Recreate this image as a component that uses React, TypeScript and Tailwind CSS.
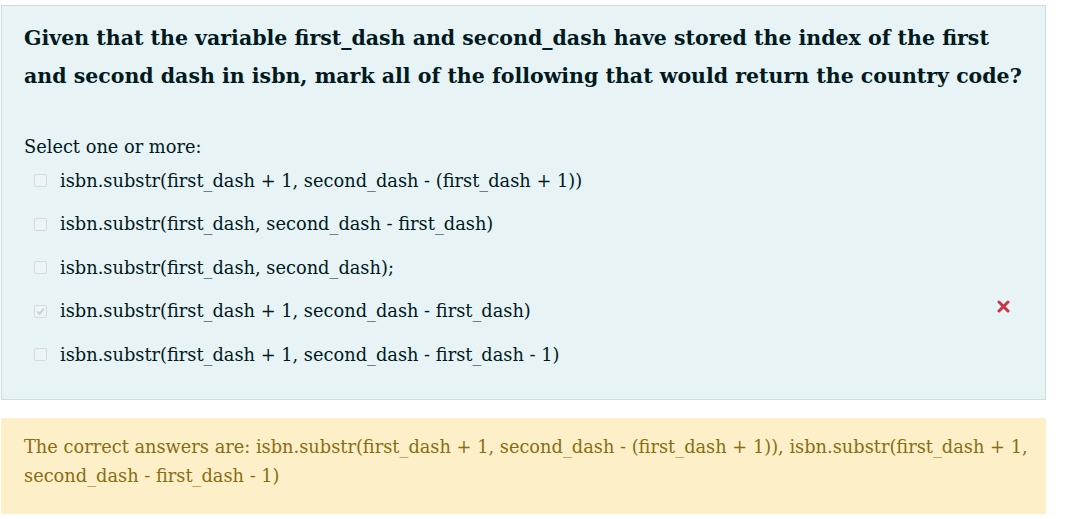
import React from 'react';

const options = [
  { text: 'isbn.substr(first_dash + 1, second_dash - (first_dash + 1))', checked: false, wrong: false },
  { text: 'isbn.substr(first_dash, second_dash - first_dash)', checked: false, wrong: false },
  { text: 'isbn.substr(first_dash, second_dash);', checked: false, wrong: false },
  { text: 'isbn.substr(first_dash + 1, second_dash - first_dash)', checked: true, wrong: true },
  { text: 'isbn.substr(first_dash + 1, second_dash - first_dash - 1)', checked: false, wrong: false },
];

const Box = ({ checked }: { checked: boolean }) => (
  <div className="w-[13px] h-[13px] shrink-0 rounded-[2px] border border-[#d3dcde] bg-[#eef4f5] flex items-center justify-center">
    {checked && (
      <svg width="9" height="9" viewBox="0 0 10 10">
        <path d="M1.5 5.2 L4 7.6 L8.6 2.2" fill="none" stroke="#c3cccf" strokeWidth="1.8" />
      </svg>
    )}
  </div>
);

const Cross = () => (
  <svg width="13" height="13" viewBox="0 0 13 13" className="mr-[13px] -mt-[10px]">
    <path d="M2 2 L11 11 M11 2 L2 11" stroke="#cc3446" strokeWidth="3" strokeLinecap="round" />
  </svg>
);

export default function App() {
  return (
    <div className="pt-[5px] pl-px w-[1046px] font-['DejaVu_Serif',serif]">
      {/* question */}
      <div className="border border-[#c4e1e8] bg-[#e7f3f5] pl-[22px] pr-[22px] pt-[13px] pb-[22px] text-[#001a1e]">
        <p className="text-[20.5px] font-bold leading-[38px]">
          Given that the variable first_dash and second_dash have stored the index of the first and second dash in
          isbn, mark all of the following that would return the country code?
        </p>
        <p className="mt-[40px] text-[17.8px] leading-[24px]">Select one or more:</p>
        <div>
          {options.map((o, i) => (
            <div key={i} className="h-[43.5px] flex items-center justify-between">
              <div className="flex items-center">
                <div className="ml-[10px] mr-[13px]">
                  <Box checked={o.checked} />
                </div>
                <span className="text-[17.8px] leading-[24px]">{o.text}</span>
              </div>
              {o.wrong && <Cross />}
            </div>
          ))}
        </div>
      </div>

      {/* outcome */}
      <div className="mt-[18px] bg-[#fdf0c9] pl-[23px] pr-[14px] pt-[14px] pb-[24px] text-[#8a6d12] text-[17.8px] leading-[29px]">
        The correct answers are: isbn.substr(first_dash + 1, second_dash - (first_dash + 1)), isbn.substr(first_dash
        + 1, second_dash - first_dash - 1)
      </div>
    </div>
  );
}
